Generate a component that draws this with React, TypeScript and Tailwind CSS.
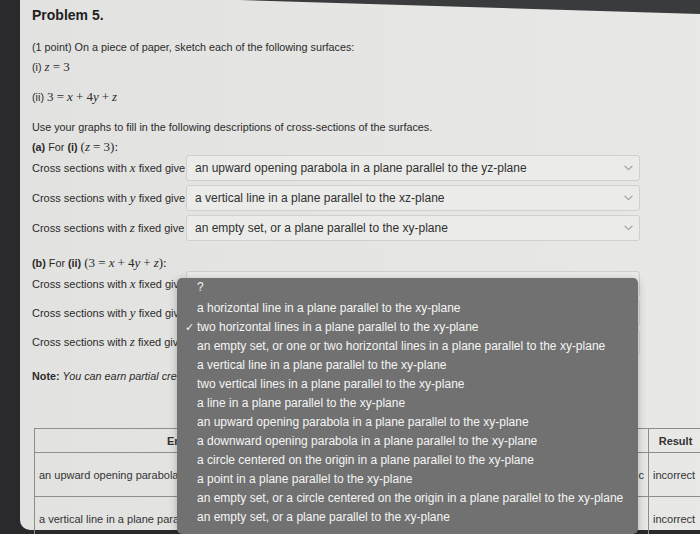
import React from "react"

const OPCOES = [
  "a horizontal line in a plane parallel to the xy-plane",
  "two horizontal lines in a plane parallel to the xy-plane",
  "an empty set, or one or two horizontal lines in a plane parallel to the xy-plane",
  "a vertical line in a plane parallel to the xy-plane",
  "two vertical lines in a plane parallel to the xy-plane",
  "a line in a plane parallel to the xy-plane",
  "an upward opening parabola in a plane parallel to the xy-plane",
  "a downward opening parabola in a plane parallel to the xy-plane",
  "a circle centered on the origin in a plane parallel to the xy-plane",
  "a point in a plane parallel to the xy-plane",
  "an empty set, or a circle centered on the origin in a plane parallel to the xy-plane",
  "an empty set, or a plane parallel to the xy-plane",
]

function M({ children }: { children: React.ReactNode }) {
  return <span className="font-['Liberation_Serif',serif] text-[13px] italic">{children}</span>
}

function N({ children }: { children: React.ReactNode }) {
  return <span className="font-['Liberation_Serif',serif] text-[13px]">{children}</span>
}

function Chevron() {
  return (
    <svg width="9" height="6" viewBox="0 0 9 6" fill="none">
      <path d="M1 1.2 L4.5 4.6 L8 1.2" stroke="#a3a3a1" strokeWidth="1.2" strokeLinecap="round" strokeLinejoin="round" />
    </svg>
  )
}

function Selecao({ texto }: { texto: string }) {
  return (
    <div className="flex h-[26px] w-[454px] items-center justify-between rounded-[3px] border border-[#d0d0cd] bg-[#ebebe9] pl-[8px] pr-[6px] text-[12px] text-[#303030]">
      <span>{texto}</span>
      <Chevron />
    </div>
  )
}

function Linha({ v, texto }: { v: string; texto: string }) {
  return (
    <div className="flex items-center">
      <div className="w-[154px] whitespace-nowrap text-[11px]">
        Cross sections with <M>{v}</M> fixed give
      </div>
      <Selecao texto={texto} />
    </div>
  )
}

const CELULA = "border border-[#8d8d8b] px-[4px] whitespace-nowrap overflow-hidden"

export default function App() {
  return (
    <div className="relative h-[534px] w-[700px] overflow-hidden bg-[#2a2a2c] font-['Liberation_Sans',Arial,sans-serif]">
      <div className="ml-[20px] h-[530px] rounded-bl-[10px] bg-gradient-to-r from-[#e2e2e0] to-[#e8e8e6] pl-[12px] text-[10.8px] leading-[16px] text-[#2b2b2b]">
        <div className="pt-[6px] text-[14px] font-bold leading-[18px] text-[#1f1f1f]">Problem 5.</div>
        <p className="mt-[15px]">(1 point) On a piece of paper, sketch each of the following surfaces:</p>
        <p className="mt-[4px]">
          (i) <M>z</M> <N>= 3</N>
        </p>
        <p className="mt-[14px]">
          (ii) <N>3 =</N> <M>x</M> <N>+ 4</N><M>y</M> <N>+</N> <M>z</M>
        </p>
        <p className="mt-[14px]">Use your graphs to fill in the following descriptions of cross-sections of the surfaces.</p>
        <p className="mt-[4px]">
          <b>(a)</b> For <b>(i)</b> <N>(</N><M>z</M> <N>= 3):</N>
        </p>
        <div className="flex flex-col gap-[4px]">
          <Linha v="x" texto="an upward opening parabola in a plane parallel to the yz-plane" />
          <Linha v="y" texto="a vertical line in a plane parallel to the xz-plane" />
          <Linha v="z" texto="an empty set, or a plane parallel to the xy-plane" />
        </div>
        <p className="mt-[14px]">
          <b>(b)</b> For <b>(ii)</b> <N>(3 =</N> <M>x</M> <N>+ 4</N><M>y</M> <N>+</N> <M>z</M><N>):</N>
        </p>
        <div className="flex flex-col gap-[3px]">
          <Linha v="x" texto="?" />
          <Linha v="y" texto="?" />
          <Linha v="z" texto="?" />
        </div>
        <p className="mt-[13px]">
          <b>Note:</b> <i>You can earn partial credit on this problem.</i>
        </p>

        <table className="mt-[44px] ml-[2px] w-[720px] table-fixed border-collapse text-[11px] text-[#333]">
          <colgroup>
            <col className="w-[306px]" />
            <col className="w-[208px]" />
            <col className="w-[100px]" />
            <col className="w-[106px]" />
          </colgroup>
          <thead>
            <tr className="h-[24px]">
              <th className={CELULA + " text-center font-bold"}>Entered</th>
              <th className={CELULA + " text-center font-bold"}>Answer Preview</th>
              <th className={CELULA + " text-center font-bold"}>Correct</th>
              <th className={CELULA + " pr-[56px] text-center font-bold"}>Result</th>
            </tr>
          </thead>
          <tbody>
            <tr className="h-[44px]">
              <td className={CELULA}>an upward opening parabola in a plane parallel to the yz-plane</td>
              <td className={CELULA}>an upward opening parabola</td>
              <td className={CELULA + " text-right"}>xy-planc</td>
              <td className={CELULA}>incorrect</td>
            </tr>
            <tr className="h-[44px]">
              <td className={CELULA}>a vertical line in a plane parallel to the xz-plane</td>
              <td className={CELULA}>a vertical line</td>
              <td className={CELULA}></td>
              <td className={CELULA}>incorrect</td>
            </tr>
          </tbody>
        </table>
      </div>

      <div className="absolute right-0 top-0 h-[14px] w-[460px] bg-[#3a3b3d] [clip-path:polygon(0_0,100%_0,100%_100%)]" />

      <div className="absolute left-[177px] top-[278px] h-[256px] w-[461px] rounded-[5px] bg-[#707170] pl-[20px] text-[12px] leading-[19px] text-[#f5f5f5] shadow-[0_2px_8px_rgba(0,0,0,0.25)]">
        <div className="mb-[2px]">?</div>
        {OPCOES.map(function (opcao, index) {
          const marcada = index === 1
          return (
            <div key={opcao} className="relative whitespace-nowrap">
              {marcada ? <span className="absolute -left-[12px] top-0 text-[11px]">✓</span> : null}
              {opcao}
            </div>
          )
        })}
      </div>
    </div>
  )
}
